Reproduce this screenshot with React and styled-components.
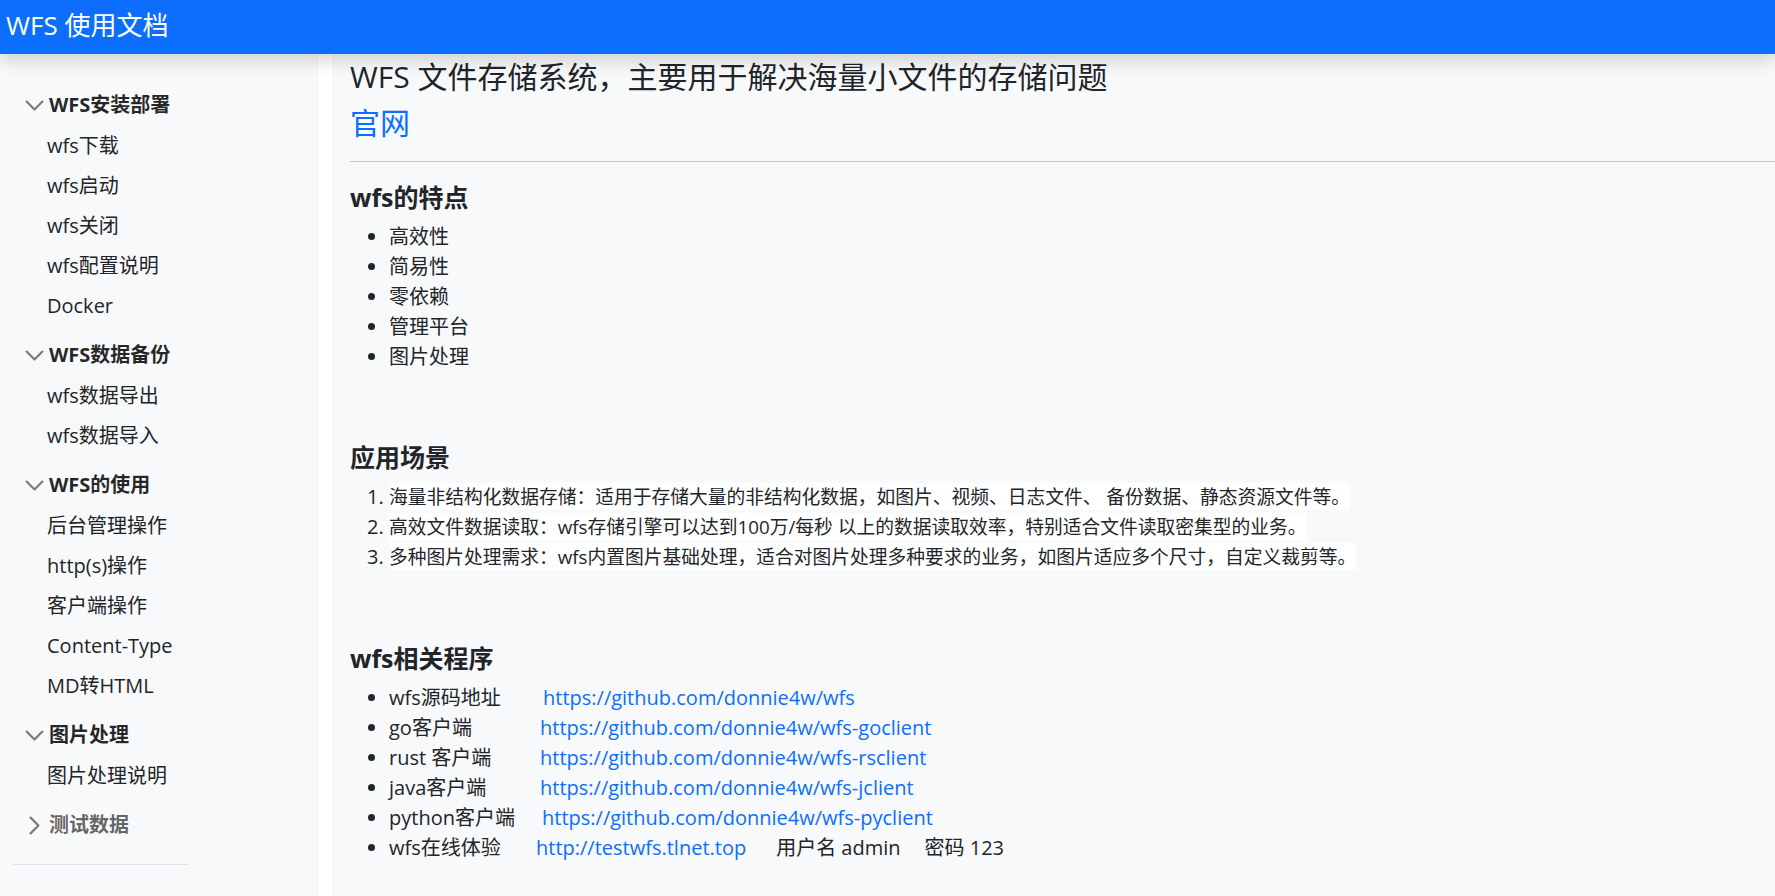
import React from "react";
import styled, { createGlobalStyle } from "styled-components";

const GlobalStyle = createGlobalStyle`
  html, body {
    margin: 0;
    padding: 0;
    background: #fff;
  }
  body {
    font-family: "Open Sans", "Noto Sans CJK SC", "Noto Sans", sans-serif;
    font-size: 20px;
    line-height: 1.5;
    color: #212529;
  }
  * { box-sizing: border-box; }
`;

const menu = [
  { title: "WFS安装部署", open: true, items: ["wfs下载", "wfs启动", "wfs关闭", "wfs配置说明", "Docker"] },
  { title: "WFS数据备份", open: true, items: ["wfs数据导出", "wfs数据导入"] },
  { title: "WFS的使用", open: true, items: ["后台管理操作", "http(s)操作", "客户端操作", "Content-Type", "MD转HTML"] },
  { title: "图片处理", open: true, items: ["图片处理说明"] },
  { title: "测试数据", open: false, items: [] },
];

const features = ["高效性", "简易性", "零依赖", "管理平台", "图片处理"];

const scenes = [
  "海量非结构化数据存储：适用于存储大量的非结构化数据，如图片、视频、日志文件、 备份数据、静态资源文件等。",
  "高效文件数据读取：wfs存储引擎可以达到100万/每秒 以上的数据读取效率，特别适合文件读取密集型的业务。",
  "多种图片处理需求：wfs内置图片基础处理，适合对图片处理多种要求的业务，如图片适应多个尺寸，自定义裁剪等。",
];

const programs = [
  { label: "wfs源码地址", width: 154, url: "https://github.com/donnie4w/wfs" },
  { label: "go客户端", width: 151, url: "https://github.com/donnie4w/wfs-goclient" },
  { label: "rust 客户端", width: 151, url: "https://github.com/donnie4w/wfs-rsclient" },
  { label: "java客户端", width: 151, url: "https://github.com/donnie4w/wfs-jclient" },
  { label: "python客户端", width: 153, url: "https://github.com/donnie4w/wfs-pyclient" },
  { label: "wfs在线体验", width: 147, url: "http://testwfs.tlnet.top", notes: ["用户名 admin", "密码 123"] },
];

function Chevron({ open }) {
  return (
    <ChevronBox $open={open}>
      <svg width="21" height="21" viewBox="0 0 16 16" fill="none">
        <path
          d="M5 14l6-6-6-6"
          stroke="rgba(0,0,0,.5)"
          strokeWidth="1.7"
          strokeLinecap="round"
          strokeLinejoin="round"
        />
      </svg>
    </ChevronBox>
  );
}

export default function App() {
  return (
    <>
      <GlobalStyle />
      <Page>
        <Header>
          <Brand>WFS 使用文档</Brand>
        </Header>
        <Body>
          <Sidebar>
            <MenuList>
              {menu.map((group) => (
                <Group key={group.title}>
                  <GroupToggle $open={group.open}>
                    <Chevron open={group.open} />
                    {group.title}
                  </GroupToggle>
                  {group.items.length > 0 && (
                    <SubList>
                      {group.items.map((item) => (
                        <li key={item}>
                          <SubLink href="#">{item}</SubLink>
                        </li>
                      ))}
                    </SubList>
                  )}
                </Group>
              ))}
            </MenuList>
            <Divider />
          </Sidebar>
          <Main>
            <Title>WFS 文件存储系统，主要用于解决海量小文件的存储问题</Title>
            <Title>
              <TitleLink href="#">官网</TitleLink>
            </Title>
            <Rule />

            <Heading>wfs的特点</Heading>
            <BulletList>
              {features.map((f) => (
                <li key={f}>{f}</li>
              ))}
            </BulletList>

            <Heading $top={70}>应用场景</Heading>
            <NumberList>
              {scenes.map((s) => (
                <li key={s}>
                  <Marked>{s}</Marked>
                </li>
              ))}
            </NumberList>

            <Heading $top={71}>wfs相关程序</Heading>
            <BulletList>
              {programs.map((p) => (
                <li key={p.label}>
                  <Label $width={p.width}>{p.label}</Label>
                  <Link href="#">{p.url}</Link>
                  {p.notes && (
                    <>
                      <Note $gap={30}>{p.notes[0]}</Note>
                      <Note $gap={24}>{p.notes[1]}</Note>
                    </>
                  )}
                </li>
              ))}
            </BulletList>
          </Main>
        </Body>
      </Page>
    </>
  );
}

const Page = styled.div`
  display: flex;
  flex-direction: column;
  min-height: 100vh;
`;

const Header = styled.header`
  position: relative;
  z-index: 2;
  height: 54px;
  display: flex;
  align-items: center;
  padding-left: 6px;
  background: #0d6efd;
  box-shadow: 0 0.5rem 1rem rgba(0, 0, 0, 0.15);
`;

const Brand = styled.div`
  color: #fff;
  font-size: 26px;
  line-height: 1.5;
  padding-bottom: 3px;
`;

const Body = styled.div`
  flex: 1;
  display: flex;
  gap: 15px;
`;

const Sidebar = styled.nav`
  width: 318px;
  flex-shrink: 0;
  background: #f8f9fa;
  padding: 31px 0 0 12px;
  border-right: 1px solid #f1f2f3;
`;

const MenuList = styled.ul`
  list-style: none;
  margin: 0;
  padding: 0;
`;

const Group = styled.li`
  margin-bottom: 5px;
`;

const GroupToggle = styled.button`
  display: flex;
  align-items: center;
  height: 40px;
  padding: 5px 10px;
  border: 0;
  background: transparent;
  font-family: inherit;
  font-size: 20px;
  font-weight: 700;
  line-height: 1.5;
  color: ${(p) => (p.$open ? "rgba(0,0,0,.85)" : "rgba(0,0,0,.62)")};
  cursor: pointer;
`;

const ChevronBox = styled.span`
  display: inline-flex;
  align-items: center;
  justify-content: center;
  width: 25px;
  height: 25px;
  margin-right: 2px;
  transform: rotate(${(p) => (p.$open ? "90deg" : "0deg")});
`;

const SubList = styled.ul`
  list-style: none;
  margin: 0;
  padding: 0 0 5px;
`;

const SubLink = styled.a`
  display: inline-flex;
  margin: 2.5px 0 0 25px;
  padding: 3.75px 10px;
  color: #212529;
  text-decoration: none;
  font-size: 20px;
  line-height: 1.5;
`;

const Divider = styled.hr`
  width: 175px;
  margin: 19px 0 0 1px;
  border: 0;
  border-top: 1px solid #dfe2e6;
`;

const Main = styled.main`
  flex: 1;
  background: #f8f9fa;
  padding: 5px 0 0 16px;
  border-left: 1px solid #f1f2f3;
`;

const Title = styled.h4`
  margin: 0 0 10px;
  font-size: 30px;
  font-weight: 400;
  line-height: 1.2;
  color: #212529;
`;

const TitleLink = styled.a`
  color: #0d6efd;
  text-decoration: none;
`;

const Rule = styled.hr`
  margin: 20px 0;
  border: 0;
  border-top: 1px solid #c4c6c8;
`;

const Heading = styled.h5`
  margin: ${(p) => p.$top || 0}px 0 10px;
  font-size: 25px;
  font-weight: 700;
  line-height: 1.2;
  color: #212529;
`;

const BulletList = styled.ul`
  margin: 0 0 20px;
  padding-left: 39px;
  line-height: 30px;
`;

const NumberList = styled.ol`
  margin: 0 0 20px;
  padding-left: 39px;
  line-height: 30px;
`;

const Marked = styled.span`
  background: #fff;
  font-size: 18.75px;
  padding: 1px 0;
`;

const Label = styled.span`
  display: inline-block;
  width: ${(p) => p.$width}px;
`;

const Link = styled.a`
  color: #0d6efd;
  text-decoration: none;
`;

const Note = styled.span`
  margin-left: ${(p) => p.$gap}px;
`;
